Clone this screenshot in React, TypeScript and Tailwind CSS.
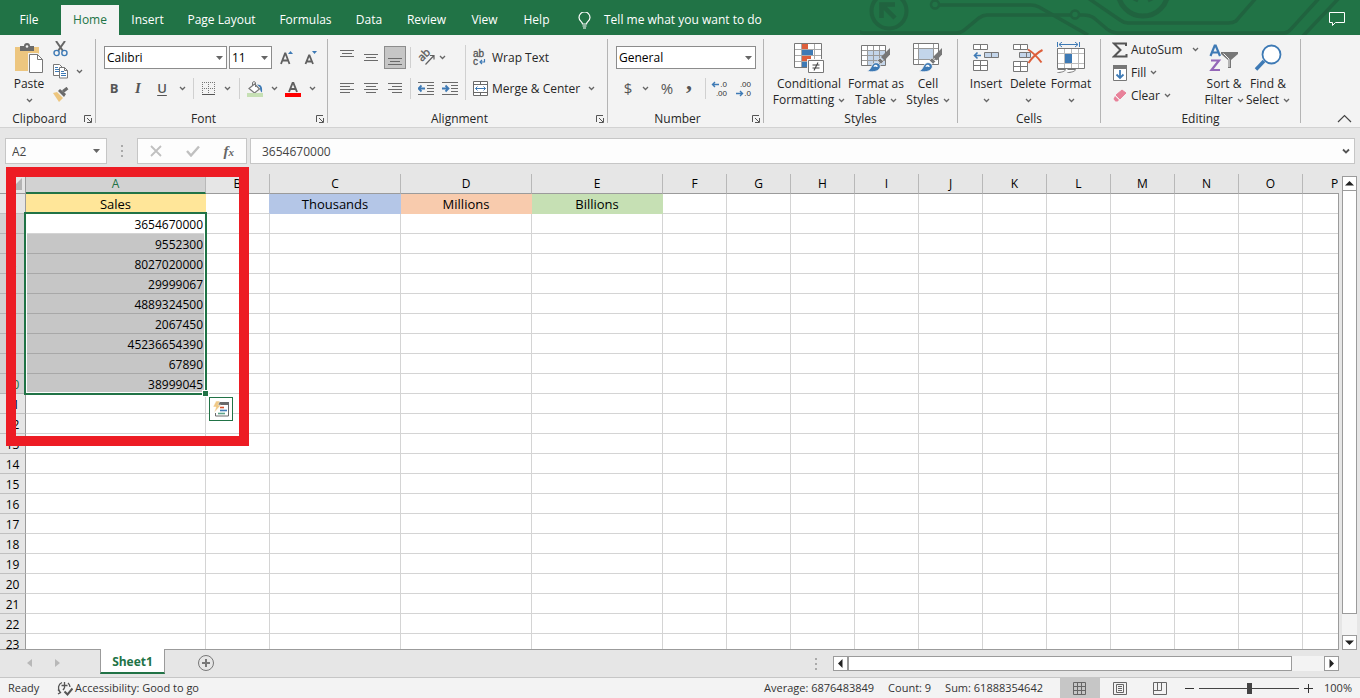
import { ReactNode, SVGProps } from 'react';

import clsx from 'clsx';

const INK = '#606060';
const BLUE = '#3e7ab5';

const tabs = [
  { name: 'File', width: 'w-[58px] mr-[3px]' },
  { name: 'Home', width: 'w-[58px]' },
  { name: 'Insert', width: 'w-[57px]' },
  { name: 'Page Layout', width: 'w-[91px]' },
  { name: 'Formulas', width: 'w-[77px]' },
  { name: 'Data', width: 'w-[50px]' },
  { name: 'Review', width: 'w-[65px]' },
  { name: 'View', width: 'w-[51px]' },
  { name: 'Help', width: 'w-[53px]' },
];

const columns = [
  { name: 'A', width: 'w-[180px]' },
  { name: 'B', width: 'w-[64px]' },
  { name: 'C', width: 'w-[131px]' },
  { name: 'D', width: 'w-[131px]' },
  { name: 'E', width: 'w-[131px]' },
  ...'FGHIJKLMNOP'.split('').map((name) => ({ name, width: 'w-[64px]' })),
];

const ROW_COUNT = 23;

const sales = [
  3654670000, 9552300, 8027020000, 29999067, 4889324500, 2067450, 45236654390, 67890, 38999045,
];

const headings: Record<string, { text: string; className: string }> = {
  A: { text: 'Sales', className: 'bg-[#ffe699] border-[#ffe699]' },
  B: { text: '', className: 'border-r-[#b4c6e7] border-b-[#d4d4d4]' },
  C: { text: 'Thousands', className: 'bg-[#b4c6e7] border-[#b4c6e7]' },
  D: { text: 'Millions', className: 'bg-[#f8cbad] border-[#f8cbad]' },
  E: { text: 'Billions', className: 'bg-[#c6e0b4] border-[#c6e0b4]' },
};

type SvgProps = SVGProps<SVGSVGElement> & { w: number; h: number };

const Svg = ({ w, h, children, ...props }: SvgProps) => (
  <svg width={w} height={h} viewBox={`0 0 ${w} ${h}`} fill="none" aria-hidden="true" {...props}>
    {children}
  </svg>
);

const Chevron = () => (
  <Svg w={7} h={5} className="shrink-0">
    <path d="M1 1l2.500 2.500L6 1" stroke="#666" strokeWidth="1.300" />
  </Svg>
);

const Triangle = () => (
  <Svg w={7} h={4}>
    <path d="M0 0h7L3.500 4z" fill="#666" />
  </Svg>
);

const PasteIcon = () => (
  <Svg w={28} h={30}>
    <path d="M0 4h24v24H0z" fill="#edc67f" />
    <path d="M5 3h4a3 3 0 0 1 6 0h4v5H5z" fill="#6a6a6a" />
    <circle cx="12" cy="3.500" r="1.300" fill="#f3f3f3" />
    <path d="M13 10h10l6 6v14H13z" fill="#f3f3f3" />
    <path d="M14.500 11.500h8l5 5v13h-13z" fill="#fff" stroke="#777" />
    <path d="M22.500 11.500v5h5" stroke="#777" />
  </Svg>
);

const CutIcon = () => (
  <Svg w={16} h={16}>
    <path d="M3 0l7 10M12 0L5 10" stroke="#666" strokeWidth="2" />
    <circle cx="3.600" cy="12" r="2.600" stroke={BLUE} strokeWidth="1.400" />
    <circle cx="11.400" cy="12" r="2.600" stroke={BLUE} strokeWidth="1.400" />
  </Svg>
);

const CopyIcon = () => (
  <Svg w={16} h={15}>
    <path d="M.5.500h6l3 3v8h-9z" fill="#fff" stroke="#777" />
    <path d="M2 3.500h3M2 5.500h4M2 7.500h4" stroke={BLUE} />
    <path d="M6.500 3.500h5l3 3v7.500h-8z" fill="#fff" stroke="#777" />
    <path d="M11.500 3.500v3h3" stroke="#777" />
    <path d="M8 7.500h3M8 9.500h5M8 11.500h5" stroke={BLUE} />
  </Svg>
);

const PainterIcon = () => (
  <Svg w={16} h={15}>
    <path d="M0 6l4-1 6 6-4 4z" fill="#edc67f" />
    <path d="M5 4l2-2 6 5-2 3z" fill="#6a6a6a" />
    <path d="M10 4.500L14.500 1" stroke="#6a6a6a" strokeWidth="3" />
  </Svg>
);

const LauncherIcon = () => (
  <Svg w={8} h={8}>
    <path d="M.5 7V.500H7M3 3l4 4M7.500 3v4.500H3" stroke="#555" />
  </Svg>
);

const GrowIcon = ({ shrink }: { shrink?: boolean }) => (
  <Svg w={14} h={16}>
    {shrink ? (
      <path d="M1.500 14L5 5.500h.5L9 14M3 11.500h5" stroke={INK} strokeWidth="1.800" />
    ) : (
      <path d="M1 14L5 3.500h.5L9.500 14M2.500 10.500h6" stroke={INK} strokeWidth="1.800" />
    )}
    <path d={shrink ? 'M8 1h5l-2.500 3z' : 'M8 4h5l-2.500-3z'} fill={BLUE} />
  </Svg>
);

const BordersIcon = () => (
  <Svg w={14} h={14}>
    <path d="M.5 0v12M6.500 0v12M12.500 0v12M0 .5h13M0 6.500h13" stroke="#777" strokeDasharray="1 1" />
    <path d="M0 12.500h13" stroke="#555" />
  </Svg>
);

const FillColorIcon = () => (
  <Svg w={16} h={16}>
    <path d="M7.500 3l5 5-5 4L2 7.500z" fill="#fff" stroke="#777" strokeWidth="1.200" />
    <path d="M5.500 5V1.500c0-1 3-1 3 0V6" stroke="#777" />
    <path d="M10 3.500c5 0 5.500 3 5 8-2-1-2-4-2-5z" fill={BLUE} />
    <path d="M0 12h16v4H0z" fill="#c6e0b4" />
  </Svg>
);

const FontColorIcon = () => (
  <Svg w={16} h={16}>
    <path d="M4 11l3.600-9h.8l3.600 9M5.500 8h5" stroke={INK} strokeWidth="1.900" />
    <path d="M0 12h16v4H0z" fill="#f00" />
  </Svg>
);

const LinesIcon = ({ d, h }: { d: string; h: number }) => (
  <Svg w={14} h={h}>
    <path d={d} stroke="#6a6a6a" />
  </Svg>
);

const OrientationIcon = () => (
  <Svg w={17} h={16} className="overflow-visible">
    <text
      transform="translate(4 12) rotate(-45)"
      fontSize="11"
      fill={INK}
      stroke={INK}
      strokeWidth=".400"
    >
      ab
    </text>
    <path d="M7.500 14.500L15.500 6M12 5.500h4v4" stroke={INK} strokeWidth="1.200" />
  </Svg>
);

const IndentIcon = ({ increase }: { increase?: boolean }) => (
  <Svg w={16} h={14}>
    <path d="M0 .5h16M9 3.500h7M9 6.500h7M9 9.500h7M0 12.500h16" stroke="#6a6a6a" />
    <path
      d={increase ? 'M0 6.500h6M3.500 3.500l3 3-3 3' : 'M7 6.500H1M3.500 3.500l-3 3 3 3'}
      stroke={BLUE}
      strokeWidth="1.800"
    />
  </Svg>
);

const WrapIcon = () => (
  <Svg
    w={16}
    h={16}
    className="overflow-visible font-['Liberation_Sans',sans-serif] text-[10px]"
  >
    <text y="7" fill="#555" stroke="#555" strokeWidth=".300">
      ab
      <tspan x="0" dy="8">
        c
      </tspan>
    </text>
    <path d="M11.500 9v3H7M9 10l-2 2 2 2" stroke={BLUE} strokeWidth="1.200" />
  </Svg>
);

const MergeIcon = () => (
  <Svg w={15} h={15}>
    <path d="M.5.500h14v14H.5z" fill="#fff" stroke="#6a6a6a" />
    <path d="M0 3.500h15M0 11.500h15M7.500 0v3.500M7.500 11.500V15" stroke="#6a6a6a" />
    <path d="M2.500 7.500h10M4.500 5.500l-2 2 2 2M10.500 5.500l2 2-2 2" stroke={BLUE} />
  </Svg>
);

const DecimalIcon = ({ decrease }: { decrease?: boolean }) => (
  <Svg
    w={16}
    h={16}
    className="overflow-visible font-['Liberation_Sans',sans-serif] text-[8px] leading-none"
  >
    <text x="15" y="6" textAnchor="end" fill="#333">
      {decrease ? '.00' : '.0'}
    </text>
    <text x="15" y="15" textAnchor="end" fill="#333">
      {decrease ? '.0' : '.00'}
    </text>
    <path
      d={decrease ? 'M0 12.500h6M4 10l2.500 2.500L4 15' : 'M7 3.500H1M3 1L.5 3.500 3 6'}
      stroke={BLUE}
      strokeWidth="1.400"
    />
  </Svg>
);

const BrushIcon = () => (
  <>
    <path d="M29 5v6.500l-5.500 6-3.500-3.500z" fill="#777" />
    <path d="M19 15l3.500 3.500-2.500 2.500-3.500-3.500z" fill="#777" stroke="#f3f3f3" strokeWidth=".500" />
    <path
      d="M6 28c4.500-1 3.500-6 7.500-8 3.500-1.500 7 2 5.500 5-2 4-9 4.500-13 3z"
      fill={BLUE}
      stroke="#f3f3f3"
      strokeWidth=".800"
    />
    <path d="M12.500 24c.5-2.500 3-3 4.500-.500l-1.500.500-1-.500z" fill="#fff" />
  </>
);

const ConditionalIcon = () => (
  <Svg w={32} h={32}>
    <path d="M1.500 1.500h27v24h-27z" fill="#fff" stroke="#777" />
    <path d="M2 7.500h26M2 13.500h26M2 19.500h26M8.500 2v23M14.500 2v23M21.500 2v23" stroke="#aaa" />
    <path d="M9 2h6v5H9zM9 14h9v5H9z" fill="#dd5f3b" />
    <path d="M9 8h11v5H9zM9 20h5v5H9z" fill={BLUE} />
    <path d="M14 17h18v15H14z" fill="#f3f3f3" />
    <path d="M15.500 18.500h15v12h-15z" fill="#fff" stroke="#777" />
    <path d="M19.500 23h7M19.500 26h7M25 20.500l-4 8" stroke="#444" strokeWidth="1.100" />
  </Svg>
);

const FormatTableIcon = () => (
  <Svg w={30} h={30}>
    <path d="M.5 2.500h24v20H.5z" fill="#fff" stroke="#777" />
    <path d="M7 8h17v14H7z" fill="#c3d5ea" />
    <path d="M1 7.500h23M1 12.500h23M1 17.500h23M6.500 3v19M12.500 3v19M18.500 3v19" stroke="#999" />
    <BrushIcon />
  </Svg>
);

const CellStylesIcon = () => (
  <Svg w={30} h={30}>
    <path d="M.5.500h25v21H.5z" fill="#fff" stroke="#777" />
    <path d="M1 5.500h24M1 16.500h24M5.500 1v20M20.500 1v20" stroke="#999" />
    <path d="M6 6h14v10H6z" fill="#c3d5ea" />
    <BrushIcon />
  </Svg>
);

const InsertIcon = () => (
  <Svg w={28} h={28}>
    <path
      d="M1.500.500h14v5h-14zM8.500.500v5M1.500 16.500h14v10h-14zM8.500 16.500v10M1.500 21.500h14"
      fill="#fff"
      stroke="#777"
    />
    <path d="M12.500 8.500h14v5h-14zM19.500 8.500v5" fill="#c3d5ea" stroke="#777" />
    <path d="M9 11.500H3M5.500 8.500l-3 3 3 3" stroke={BLUE} strokeWidth="1.600" />
  </Svg>
);

const DeleteIcon = () => (
  <Svg w={30} h={28}>
    <path
      d="M.5.500h14v5H.5zM7.500.500v5M.5 17.500h14v10H.5zM7.500 17.500v10M.5 22.500h14"
      fill="#fff"
      stroke="#777"
    />
    <path d="M6.500 8.500h11v5h-11zM13.500 8.500v5" fill="#c3d5ea" stroke="#777" />
    <path d="M15 5.500c5 3 9 7 13.500 13M29.500 6c-6 3-10 7-14 13" stroke="#dd5f3b" strokeWidth="2" />
  </Svg>
);

const FormatIcon = () => (
  <Svg w={30} h={32}>
    <path d="M1.500 0v5M23.500 0v5M3 2.500h19M6 0L3 2.500 6 5M19 0l3 2.500L19 5" stroke={BLUE} />
    <path d="M1.500 6.500h27v20h-27z" fill="#fff" stroke="#777" />
    <path d="M2 11.500h26M2 21.500h26M8.500 7v19M15.500 7v19M22.500 7v19" stroke="#bbb" />
    <path d="M9 12h7v9H9z" fill={BLUE} />
    <path d="M1.500 27.500h8c0 2-5 3-8 3M11.500 27.500h8c0 2-5 3-8 3" fill="#fff" stroke="#777" />
  </Svg>
);

const SigmaIcon = () => (
  <Svg w={16} h={16}>
    <path d="M14 4V1.500H2L8.500 8 2 14.500h12.500V12" stroke="#555" strokeWidth="2" />
  </Svg>
);

const FillIcon = () => (
  <Svg w={14} h={16}>
    <path d="M.5.500h13v15H.5z" fill="#fff" stroke="#777" />
    <path d="M0 0h14v4H0z" fill="#777" />
    <path d="M7 5v8M3.500 9.500L7 13l3.500-3.500" stroke={BLUE} strokeWidth="1.800" />
  </Svg>
);

const EraserIcon = () => (
  <Svg w={14} h={14}>
    <path d="M9 1l4 3-6 6-4-4z" fill="#e8829a" stroke="#e8829a" strokeLinejoin="round" />
    <path d="M2 7l4 4-1.500 1.500h-2L.5 10z" fill="#e8829a" />
  </Svg>
);

const SortIcon = () => (
  <Svg w={30} h={28}>
    <path d="M1.500 12L5.700 1.500h1L11 12M3 8.500h6.500" stroke={BLUE} strokeWidth="2.200" />
    <path d="M2 16.500h8L2.500 26H11" stroke="#9467b8" strokeWidth="2.200" />
    <path d="M12 8h17v2l-7 6v8h-3v-8l-7-6z" fill="#777" />
    <path d="M14.500 9.500l5.500 5.500v8" stroke="#f3f3f3" />
  </Svg>
);

const FindIcon = () => (
  <Svg w={28} h={28}>
    <path d="M10 17l-8 8.500" stroke={BLUE} strokeWidth="3.500" />
    <circle cx="17.500" cy="10.500" r="9" fill="#fff" stroke={BLUE} strokeWidth="1.800" />
  </Svg>
);

const AnalysisIcon = () => (
  <Svg w={16} h={16}>
    <path d="M3 1h13v3H3z" fill="#6a6a6a" />
    <path d="M2.500 12v3h13V3" stroke="#6a6a6a" />
    <path d="M7 6.500h4" stroke="#d9532c" strokeWidth="1.600" />
    <path d="M7 9.500h7" stroke={BLUE} strokeWidth="1.600" />
    <path d="M5 12.500h7" stroke="#5fa38a" strokeWidth="1.600" />
    <path d="M3 0h4L5 4h3L1 12l2-6H0z" fill="#f0c987" stroke="#fff" strokeWidth=".500" />
  </Svg>
);

const Circuit = () => (
  <Svg w={500} h={35} className="absolute top-0 right-0" stroke="#20633f">
    <circle cx="29" cy="11" r="17.500" strokeWidth="4" />
    <path d="M21.500 18V4.500H35M22 5l13 13" strokeWidth="4.500" />
    <circle cx="75" cy="4.500" r="4" strokeWidth="2.500" />
    <g strokeWidth="3.500">
      <path d="M79 5h92q4 0 8 2l49 28" />
      <path d="M-5 29l3 2q3 2 6 2h92q4 0 7-2l16-13q4-3 8-3h84" />
      <path d="M219 15h4q7 0 11 3l13 11q5 4 10 4h167q4 0 7-4l31-34" />
      <path d="M228-2l32 22q4 3 8 3h100q5 0 8-2l20-23" />
      <path d="M443 36l36-38" />
    </g>
    <circle cx="215" cy="14.500" r="4" strokeWidth="2.500" />
    <circle cx="283" cy="-9" r="25" strokeWidth="5" />
    <path d="M272-2l6 3M288 1l6-3" strokeWidth="3" />
  </Svg>
);

const Header = () => (
  <header className="relative flex h-[35px] items-stretch bg-[#217346] text-xs text-white">
    <Circuit />
    <nav className="flex pt-[5px]">
      {tabs.map(({ name, width }) => (
        <button
          key={name}
          className={clsx(width, 'whitespace-nowrap', name === 'Home' && 'bg-[#f3f3f3] text-[#217346]')}
        >
          {name}
        </button>
      ))}
    </nav>
    <button className="relative ml-[15px] flex items-center gap-[13px] pt-[5px] whitespace-nowrap">
      <Svg w={13} h={17} stroke="#fff" strokeWidth="1.200">
        <path d="M4.500 12c0-2.500-3.500-3-3.500-6.500a5.500 5.500 0 0 1 11 0C12 9 8.500 9.500 8.500 12zM4.500 14h4M5 16h3" />
      </Svg>
      Tell me what you want to do
    </button>
    <button className="relative mr-[14px] ml-auto pt-1" aria-label="Comments">
      <Svg w={17} h={15} stroke="#fff">
        <path d="M.5.500h15v10h-9l-3 3v-3h-3z" />
      </Svg>
    </button>
  </header>
);

type GroupProps = {
  label: string;
  width: string;
  launcher?: boolean;
  children: ReactNode;
};

const Group = ({ label, width, launcher, children }: GroupProps) => (
  <>
    <section className={clsx('flex shrink-0 flex-col', width)}>
      <div className="flex h-[76px]">{children}</div>
      <div className="relative flex h-4 items-center justify-center">
        <h2 className={clsx(launcher && 'pr-4')}>{label}</h2>
        {launcher && (
          <button className="absolute right-[3px]" aria-label={`${label} settings`}>
            <LauncherIcon />
          </button>
        )}
      </div>
    </section>
    <div className="my-1 w-px shrink-0 bg-[#b4b4b4]" />
  </>
);

type IconButtonProps = { label: string; width?: string; className?: string; children: ReactNode };

const IconButton = ({ label, width = 'w-6', className, children }: IconButtonProps) => (
  <button
    aria-label={label}
    className={clsx('flex h-[23px] shrink-0 items-center justify-center', width, className)}
  >
    {children}
  </button>
);

const Separator = ({ className }: { className: string }) => (
  <div className={clsx('h-[21px] w-px shrink-0 bg-[#d0d0d0]', className)} />
);

type BigButtonProps = { icon: ReactNode; lines: [string, string]; width: string };

const BigButton = ({ icon, lines, width }: BigButtonProps) => (
  <button className={clsx('flex shrink-0 flex-col items-center pt-[7px] leading-4 whitespace-nowrap', width)}>
    <span className="mb-[2px] flex h-8 items-center">{icon}</span>
    <span>{lines[0]}</span>
    <span className="flex h-4 items-center gap-1">
      {lines[1]}
      <Chevron />
    </span>
  </button>
);

type DropdownProps = { label: string; value: string; width: string };

const Dropdown = ({ label, value, width }: DropdownProps) => (
  <div className={clsx('relative flex shrink-0 items-center', width)}>
    <select
      aria-label={label}
      className="h-[23px] w-full appearance-none border border-[#8c8c8c] bg-white pl-[2px] text-black"
    >
      <option>{value}</option>
    </select>
    <span className="pointer-events-none absolute right-1">
      <Triangle />
    </span>
  </div>
);

const Ribbon = () => (
  <div className="flex border-b border-[#d2d2d2] bg-[#f3f3f3] text-xs text-[#262626]">
    <Group label="Clipboard" width="w-[95px]" launcher>
      <div className="flex pl-[5px]">
        <BigButton icon={<PasteIcon />} lines={['Paste', '']} width="w-12" />
        <div className="flex flex-col pt-[2px]">
          <IconButton label="Cut" width="w-4">
            <CutIcon />
          </IconButton>
          <div className="flex">
            <IconButton label="Copy" width="w-4">
              <CopyIcon />
            </IconButton>
            <IconButton label="Copy options" width="w-5">
              <Chevron />
            </IconButton>
          </div>
          <IconButton label="Format painter" width="w-4">
            <PainterIcon />
          </IconButton>
        </div>
      </div>
    </Group>

    <Group label="Font" width="w-[231px]" launcher>
      <div className="flex flex-col gap-2 pt-[11px] pl-[6px]">
        <div className="flex pl-[2px]">
          <Dropdown label="Font family" value="Calibri" width="w-[123px] mr-[2px]" />
          <Dropdown label="Font size" value="11" width="w-[43px] mr-[3px]" />
          <IconButton label="Increase font size">
            <GrowIcon />
          </IconButton>
          <IconButton label="Decrease font size">
            <GrowIcon shrink />
          </IconButton>
        </div>
        <div className="flex items-center text-[13px] text-[#555]">
          <IconButton label="Bold" className="font-bold">
            B
          </IconButton>
          <IconButton label="Italic" className="font-['Liberation_Serif',serif] text-[15px] font-bold italic">
            I
          </IconButton>
          <IconButton label="Underline" className="font-semibold underline underline-offset-2">
            U
          </IconButton>
          <IconButton label="Underline options" width="w-4">
            <Chevron />
          </IconButton>
          <Separator className="mr-[5px] ml-[3px]" />
          <IconButton label="Borders" width="w-5">
            <BordersIcon />
          </IconButton>
          <IconButton label="Border options" width="w-4">
            <Chevron />
          </IconButton>
          <Separator className="mx-1" />
          <IconButton label="Fill color" width="w-[22px]">
            <FillColorIcon />
          </IconButton>
          <IconButton label="Fill color options" width="w-4">
            <Chevron />
          </IconButton>
          <IconButton label="Font color" width="w-[22px]">
            <FontColorIcon />
          </IconButton>
          <IconButton label="Font color options" width="w-4">
            <Chevron />
          </IconButton>
        </div>
      </div>
    </Group>

    <Group label="Alignment" width="w-[279px]" launcher>
      <div className="flex flex-col gap-2 pt-[11px] pl-[7px]">
        <div className="flex items-center">
          <IconButton label="Top align" className="pb-2">
            <LinesIcon h={8} d="M0 .5h14M2 3.500h10M0 6.500h14" />
          </IconButton>
          <IconButton label="Middle align">
            <LinesIcon h={8} d="M0 .5h14M2 3.500h10M0 6.500h14" />
          </IconButton>
          <IconButton
            label="Bottom align"
            width="w-[22px] mx-px"
            className="border border-[#8c8c8c] bg-[#c6c6c6] pt-2"
          >
            <LinesIcon h={8} d="M0 .5h14M2 3.500h10M0 6.500h14" />
          </IconButton>
          <Separator className="mx-[3px]" />
          <IconButton label="Orientation">
            <OrientationIcon />
          </IconButton>
          <IconButton label="Orientation options" width="w-2">
            <Chevron />
          </IconButton>
        </div>
        <div className="flex items-center">
          <IconButton label="Align left">
            <LinesIcon h={11} d="M0 .5h14M0 3.500h10M0 6.500h14M0 9.500h10" />
          </IconButton>
          <IconButton label="Center">
            <LinesIcon h={11} d="M0 .5h14M2 3.500h10M0 6.500h14M2 9.500h10" />
          </IconButton>
          <IconButton label="Align right">
            <LinesIcon h={11} d="M0 .5h14M4 3.500h10M0 6.500h14M4 9.500h10" />
          </IconButton>
          <Separator className="mx-[3px]" />
          <IconButton label="Decrease indent">
            <IndentIcon />
          </IconButton>
          <IconButton label="Increase indent">
            <IndentIcon increase />
          </IconButton>
        </div>
      </div>
      <div className="mt-[10px] ml-[3px] h-[55px] w-px bg-[#d0d0d0]" />
      <div className="flex flex-col gap-2 pt-[11px] pl-[7px]">
        <button className="flex h-[23px] items-center gap-[3px] whitespace-nowrap">
          <WrapIcon />
          Wrap Text
        </button>
        <div className="flex">
          <button className="flex h-[23px] w-[110px] items-center gap-1 whitespace-nowrap">
            <MergeIcon />
            Merge &amp; Center
          </button>
          <IconButton label="Merge options" width="w-4">
            <Chevron />
          </IconButton>
        </div>
      </div>
    </Group>

    <Group label="Number" width="w-[155px]" launcher>
      <div className="flex flex-col gap-2 pt-[11px] pl-2">
        <Dropdown label="Number format" value="General" width="w-[140px]" />
        <div className="flex items-center text-[15px] text-[#555]">
          <IconButton label="Currency" className="pb-[2px]">
            $
          </IconButton>
          <IconButton label="Currency options" width="w-[10px]" className="mr-[5px]">
            <Chevron />
          </IconButton>
          <IconButton label="Percent" className="pb-[2px]">
            %
          </IconButton>
          <IconButton
            label="Comma style"
            width="w-5"
            className="pb-4 font-['Liberation_Serif',serif] text-2xl leading-none font-bold"
          >
            ,
          </IconButton>
          <Separator className="mr-[2px] ml-[6px]" />
          <IconButton label="Increase decimal">
            <DecimalIcon />
          </IconButton>
          <IconButton label="Decrease decimal">
            <DecimalIcon decrease />
          </IconButton>
        </div>
      </div>
    </Group>

    <Group label="Styles" width="w-[193px]">
      <div className="flex pl-[6px]">
        <BigButton icon={<ConditionalIcon />} lines={['Conditional', 'Formatting']} width="w-[78px]" />
        <BigButton icon={<FormatTableIcon />} lines={['Format as', 'Table']} width="w-[56px]" />
        <BigButton icon={<CellStylesIcon />} lines={['Cell', 'Styles']} width="w-12" />
      </div>
    </Group>

    <Group label="Cells" width="w-[142px]">
      <div className="flex pl-[7px]">
        <BigButton icon={<InsertIcon />} lines={['Insert', '']} width="w-[42px]" />
        <BigButton icon={<DeleteIcon />} lines={['Delete', '']} width="w-[42px]" />
        <BigButton icon={<FormatIcon />} lines={['Format', '']} width="w-[44px]" />
      </div>
    </Group>

    <Group label="Editing" width="w-[199px]">
      <div className="flex w-[101px] flex-col pt-[3px] pl-[11px]">
        <button className="flex h-[23px] items-center gap-[3px]">
          <SigmaIcon />
          <span className="mr-[6px]">AutoSum</span>
          <Chevron />
        </button>
        <button className="flex h-[23px] items-center gap-1 pl-px">
          <FillIcon />
          Fill
          <Chevron />
        </button>
        <button className="flex h-[23px] items-center gap-1 pl-px">
          <EraserIcon />
          Clear
          <Chevron />
        </button>
      </div>
      <BigButton icon={<SortIcon />} lines={['Sort &', 'Filter']} width="w-[44px]" />
      <BigButton icon={<FindIcon />} lines={['Find &', 'Select']} width="w-[44px]" />
    </Group>

    <button className="mr-2 mb-1 ml-auto self-end" aria-label="Collapse ribbon">
      <Svg w={15} h={9}>
        <path d="M1 8l6.500-6.500L14 8" stroke="#444" strokeWidth="1.200" />
      </Svg>
    </button>
  </div>
);

const Dots = () => (
  <Svg w={3} h={12}>
    <path d="M0 0h2v2H0zM0 5h2v2H0zM0 10h2v2H0z" fill="#aaa" />
  </Svg>
);

const FormulaBar = () => (
  <div className="flex h-[46px] items-start px-[5px] pt-[10px] text-xs text-[#444]">
    <div className="flex h-[26px] w-[102px] items-center border border-[#c6c6c6] bg-[#fdfdfd] pr-[6px]">
      <input
        aria-label="Name box"
        defaultValue="A2"
        className="min-w-0 flex-1 pt-[2px] pl-[6px] outline-none"
      />
      <button aria-label="Names">
        <Triangle />
      </button>
    </div>
    <div className="flex h-[26px] w-[30px] items-center justify-center">
      <Dots />
    </div>
    <div className="mr-[3px] flex h-[26px] w-[110px] items-center justify-around border border-[#c6c6c6] bg-[#fdfdfd]">
      <button aria-label="Cancel">
        <Svg w={12} h={12} stroke="#c0c0c0" strokeWidth="1.800">
          <path d="M1 1l10 10M11 1L1 11" />
        </Svg>
      </button>
      <button aria-label="Enter">
        <Svg w={14} h={12} stroke="#c0c0c0" strokeWidth="2.400">
          <path d="M1 6l4 4.500L13 1.500" />
        </Svg>
      </button>
      <button
        aria-label="Insert function"
        className="font-['Liberation_Serif',serif] text-[15px] leading-4 font-bold text-[#666] italic"
      >
        f<span className="text-[11px]">x</span>
      </button>
    </div>
    <div className="flex h-[26px] flex-1 items-center border border-[#c6c6c6] bg-[#fdfdfd] pr-1">
      <input
        aria-label="Formula bar"
        defaultValue="3654670000"
        className="min-w-0 flex-1 pt-[2px] pl-[11px] outline-none"
      />
      <button aria-label="Expand formula bar">
        <Svg w={8} h={7} stroke="#555" strokeWidth="1.800">
          <path d="M1 1.500l3 3 3-3" />
        </Svg>
      </button>
    </div>
  </div>
);

const DataRow = ({ row }: { row: number }) => {
  const selected = row >= 2 && row <= 10;
  return (
    <tr>
      <th
        className={clsx(
          'h-5 border-r border-b border-r-[#9b9b9b] p-0 pt-[2px] font-normal',
          selected
            ? 'border-b-[#b4b4b4] bg-[#d2d2d2] text-[#217346]'
            : 'border-b-[#c0c0c0] bg-[#e6e6e6]',
        )}
      >
        {row}
      </th>
      {columns.map(({ name }) => {
        const heading = row === 1 ? headings[name] : undefined;
        const value = name === 'A' && selected ? sales[row - 2] : undefined;
        return (
          <td
            key={name}
            className={clsx(
              'h-5 border-r border-b p-0',
              heading ? ['text-center text-[13px]', heading.className] : 'border-r-[#d4d4d4]',
              !heading && (value === undefined || row === 2) && 'border-b-[#d4d4d4]',
              value !== undefined && 'pt-[2px] pr-[2px] text-right',
              value !== undefined && row > 2 && 'border-b-[#a8a8a8] bg-[#c6c6c6]',
            )}
          >
            {heading ? heading.text : value}
          </td>
        );
      })}
    </tr>
  );
};

const ArrowButton = ({ label, d }: { label: string; d: string }) => (
  <button
    aria-label={label}
    className="flex h-[15px] w-[15px] shrink-0 items-center justify-center border border-[#9b9b9b] bg-white"
  >
    <Svg w={9} h={9}>
      <path d={d} fill="#222" />
    </Svg>
  </button>
);

const Sheet = () => (
  <main className="relative flex min-h-0 flex-1 bg-[#e6e6e6]">
    <div className="min-w-0 flex-1 overflow-hidden border-b border-[#9b9b9b]">
      <table className="w-[1367px] table-fixed border-separate border-spacing-0 bg-white text-xs leading-4 text-black">
        <colgroup>
          <col className="w-[26px]" />
          {columns.map(({ name, width }) => (
            <col key={name} className={width} />
          ))}
        </colgroup>
        <thead>
          <tr>
            <th className="h-5 border-r border-b border-[#9b9b9b] bg-[#e6e6e6] p-0">
              <Svg w={12} h={12} className="ml-[10px]">
                <path d="M12 0v12H0z" fill="#b4b4b4" />
              </Svg>
            </th>
            {columns.map(({ name }) => (
              <th
                key={name}
                className={clsx(
                  'h-5 border-r border-r-[#b8b8b8] p-0 font-normal',
                  name === 'A'
                    ? 'border-b-2 border-b-[#217346] bg-[#d2d2d2] pt-px text-[#217346]'
                    : 'border-b border-b-[#9b9b9b] bg-[#e6e6e6]',
                )}
              >
                {name}
              </th>
            ))}
          </tr>
        </thead>
        <tbody>
          {Array.from({ length: ROW_COUNT }, (_, i) => (
            <DataRow key={i} row={i + 1} />
          ))}
        </tbody>
      </table>
    </div>
    <div className="mt-[19px] w-px bg-[#9b9b9b]" />
    <div className="mx-[3px] mt-[2px] flex w-[15px] flex-col bg-[#f3f3f3]">
      <ArrowButton label="Scroll up" d="M0 6.500h9L4.500 2z" />
      <div className="mb-[21px] flex-1 border border-t-0 border-[#9b9b9b] bg-white" />
      <ArrowButton label="Scroll down" d="M0 2.500h9L4.500 7z" />
    </div>

    {/* selection frame and its fill handle */}
    <div className="pointer-events-none absolute top-[38px] left-[24px] h-[183px] w-[183px] border-2 border-[#217346]">
      <div className="h-full w-full border border-white" />
      <div className="absolute -right-[4px] -bottom-[4px] h-[7px] w-[7px] border border-white bg-[#217346]" />
    </div>
    <button
      aria-label="Quick analysis"
      className="absolute top-[223px] left-[209px] flex h-6 w-6 items-center justify-center border border-[#217346] bg-white"
    >
      <AnalysisIcon />
    </button>
    <div className="pointer-events-none absolute -top-[7px] left-[6px] h-[279px] w-[243px] border-10 border-[#ed1c24]" />
  </main>
);

const SheetTabs = () => (
  <div className="flex h-[27px] items-start">
    <div className="flex h-[26px] w-[100px] items-center gap-[23px] pl-[27px]">
      <button aria-label="Previous sheet">
        <Svg w={5} h={8}>
          <path d="M5 0v8L0 4z" fill="#b8b8b8" />
        </Svg>
      </button>
      <button aria-label="Next sheet">
        <Svg w={5} h={8}>
          <path d="M0 0v8l5-4z" fill="#b8b8b8" />
        </Svg>
      </button>
    </div>
    <button className="relative -mt-px h-[25px] w-[65px] border-x border-b-2 border-x-[#9b9b9b] border-b-[#217346] bg-white pt-[3px] text-xs font-bold text-[#217346]">
      Sheet1
    </button>
    <button aria-label="New sheet" className="mt-[5px] ml-[33px]">
      <Svg w={16} h={16} stroke="#777">
        <circle cx="8" cy="8" r="7.500" />
        <path d="M8 4v8M4 8h8" strokeWidth="2" />
      </Svg>
    </button>
    <div className="mr-[21px] ml-auto flex items-center pt-[6px]">
      <Dots />
      <div className="ml-[15px] flex w-[506px] bg-[#f3f3f3]">
        <ArrowButton label="Scroll left" d="M6.500 0v9L2 4.500z" />
        <div className="mr-8 flex-1 border border-[#9b9b9b] bg-white" />
        <ArrowButton label="Scroll right" d="M2.500 0v9L7 4.500z" />
      </div>
    </div>
  </div>
);

type ViewButtonProps = { label: string; d: string; active?: boolean };

const ViewButton = ({ label, d, active }: ViewButtonProps) => (
  <button
    aria-label={label}
    className={clsx('flex w-10 items-center justify-center', active && 'bg-[#c6c6c6]')}
  >
    <Svg w={14} h={13} stroke="#666">
      <path d={d} />
    </Svg>
  </button>
);

const StatusBar = () => (
  <footer className="flex h-[21px] items-center border-t border-[#c6c6c6] bg-[#f3f3f3] text-[11px] whitespace-nowrap text-[#333]">
    <span className="w-[57px] pl-2">Ready</span>
    <button className="flex items-center gap-[2px]">
      <Svg w={16} h={15} stroke="#555" strokeWidth="1.300">
        <path d="M5 1.500A6 6 0 0 0 3 11M1 8.500l2.500 3L1 13M11 2a6 6 0 0 1 2 4" />
        <path d="M4.500 4.500h6M7.500 1v6M7.500 7L6 9" />
        <path d="M7.500 10.500l3 3 5-6" strokeWidth="2" />
      </Svg>
      Accessibility: Good to go
    </button>
    <span className="mr-[14px] ml-auto">Average: 6876483849</span>
    <span className="mr-[14px]">Count: 9</span>
    <span className="mr-[17px]">Sum: 61888354642</span>
    <div className="flex h-5">
      <ViewButton label="Normal" active d="M.5.500h12v12H.5zM4.500 0v13M8.500 0v13M0 4.500h13M0 8.500h13" />
      <ViewButton label="Page layout" d="M.5.500h13v12H.5zM3.500 2.500h7v8h-7zM5 4.500h4M5 6.500h4M5 8.500h4" />
      <ViewButton label="Page break preview" d="M.5.500h13v12H.5zM.5 8.500h8v-8M4.500.500v8" />
    </div>
    <button aria-label="Zoom out" className="ml-[5px]">
      <Svg w={9} h={9} stroke="#333">
        <path d="M0 4.500h9" />
      </Svg>
    </button>
    <input
      type="range"
      aria-label="Zoom"
      defaultValue={50}
      className="mx-[5px] h-3 w-[100px] appearance-none bg-transparent [&::-webkit-slider-runnable-track]:h-px [&::-webkit-slider-runnable-track]:bg-[#444] [&::-webkit-slider-thumb]:-mt-[5px] [&::-webkit-slider-thumb]:h-[11px] [&::-webkit-slider-thumb]:w-[5px] [&::-webkit-slider-thumb]:appearance-none [&::-webkit-slider-thumb]:bg-[#444]"
    />
    <button aria-label="Zoom in">
      <Svg w={9} h={9} stroke="#333">
        <path d="M0 4.500h9M4.500 0v9" />
      </Svg>
    </button>
    <span className="w-[47px] pr-2 text-right">100%</span>
  </footer>
);

export default function App() {
  return (
    <div className="flex h-screen flex-col overflow-hidden bg-[#e6e6e6] font-['Open_Sans','Noto_Sans',sans-serif]">
      <Header />
      <Ribbon />
      <FormulaBar />
      <Sheet />
      <SheetTabs />
      <StatusBar />
    </div>
  );
}
